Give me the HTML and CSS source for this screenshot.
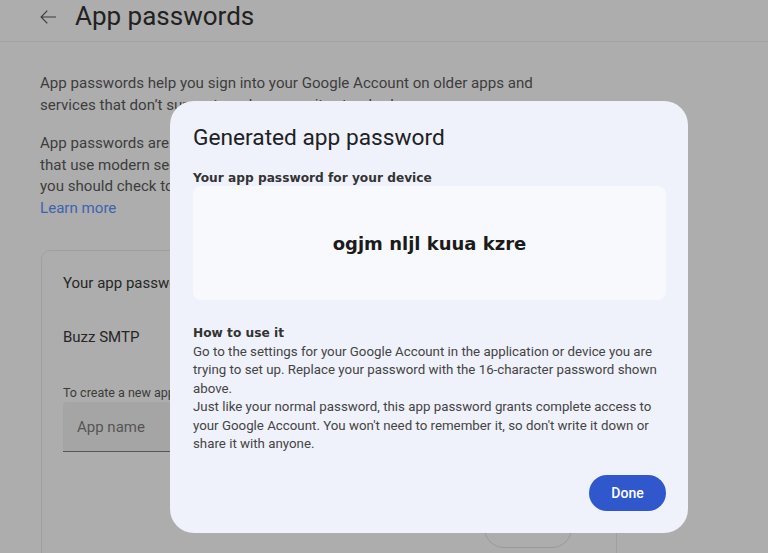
FILE: index.html
```html
<!DOCTYPE html>
<html lang="en">
<head>
<meta charset="utf-8">
<title>App passwords</title>
<link rel="stylesheet" href="styles.css">
</head>
<body>
<div class="page">
  <header class="topbar">
    <svg class="back" width="24" height="24" viewBox="0 0 24 24"><path d="M20 11.4H6.4l5.3-5.3-.8-.8L4.3 12l6.6 6.7.8-.8-5.3-5.3H20z" fill="currentColor"/></svg>
    <h1 class="title">App passwords</h1>
  </header>
  <main class="content">
    <p class="para">App passwords help you sign into your Google Account on older apps and<br>services that don’t support modern security standards.</p>
    <p class="para second">App passwords are less secure than using up-to-date apps and services<br>that use modern security standards. Before you create an app password,<br>you should check to see if your app needs this in order to sign in.<br><a class="link" href="#">Learn more</a></p>
    <section class="card">
      <h2 class="card-title">Your app passwords</h2>
      <div class="app-row">Buzz SMTP</div>
      <p class="hint">To create a new app specific password, type a name for it below...</p>
      <div class="field"><span class="placeholder">App name</span></div>
      <div class="actions"><span class="create">Create</span></div>
    </section>
  </main>
</div>
<div class="dialog" role="dialog">
  <h2 class="dlg-title">Generated app password</h2>
  <div class="label">Your app password for your device</div>
  <div class="pw-box"><span class="pw">ogjm nljl kuua kzre</span></div>
  <div class="label how">How to use it</div>
  <p class="body-text">Go to the settings for your Google Account in the application or device you are trying to set up. Replace your password with the 16-character password shown above.<br>Just like your normal password, this app password grants complete access to your Google Account. You won't need to remember it, so don't write it down or share it with anyone.</p>
  <div class="dlg-actions"><button class="done">Done</button></div>
</div>
</body>
</html>
```
FILE: styles.css
```css
html, body {
  margin: 0;
  padding: 0;
}
body {
  background: #adadad;
  font-family: Roboto, "Liberation Sans", sans-serif;
  width: 768px;
  height: 553px;
  overflow: hidden;
  position: relative;
}
.page {
  width: 768px;
}
.topbar {
  display: flex;
  align-items: center;
  height: 41px;
  border-bottom: 1px solid #a2a2a2;
  padding-left: 36px;
  gap: 15px;
}
.back {
  color: #3a3a3a;
  margin-top: -7px;
}
.title {
  margin: -10px 0 0;
  font-size: 26px;
  font-weight: 400;
  color: #222;
}
.content {
  padding: 31px 0 0 40px;
}
.para {
  margin: 0;
  font-size: 15.1px;
  line-height: 21.5px;
  color: #3d3d3d;
}
.para.second {
  margin-top: 17px;
}
.link {
  color: #4062b2;
  text-decoration: none;
}
.card {
  margin: 31px 0 0 1px;
  width: 576px;
  height: 320px;
  border: 1px solid #a0a0a0;
  border-radius: 9px;
  box-sizing: border-box;
  padding: 21px 21px 0;
}
.card-title {
  margin: 0;
  font-size: 15px;
  font-weight: 400;
  color: #262626;
  line-height: 22px;
}
.app-row {
  margin-top: 32px;
  font-size: 15px;
  line-height: 22px;
  color: #262626;
}
.hint {
  margin: 37px 0 0;
  font-size: 12.5px;
  line-height: 16px;
  color: #3b3b3b;
}
.field {
  margin-top: 1px;
  width: 400px;
  height: 50px;
  background: #a5a5a5;
  border-bottom: 1.5px solid #555;
  border-radius: 4px 4px 0 0;
  box-sizing: border-box;
  display: flex;
  align-items: center;
  padding-left: 14px;
}
.placeholder {
  font-size: 15px;
  color: #555;
}
.actions {
  display: flex;
  justify-content: flex-end;
  margin-top: 56px;
  padding-right: 23px;
}
.create {
  width: 88px;
  height: 40px;
  border: 1px solid #9a9a9a;
  border-radius: 20px;
  box-sizing: border-box;
  display: flex;
  align-items: center;
  justify-content: center;
  font-size: 14px;
  color: #555;
}
.dialog {
  position: absolute;
  left: 170px;
  top: 101px;
  width: 518px;
  height: 432px;
  box-sizing: border-box;
  background: #eff2fa;
  border-radius: 24px;
  padding: 23px 22px 22px 23px;
  display: flex;
  flex-direction: column;
}
.dlg-title {
  margin: 0;
  font-size: 22.7px;
  font-weight: 400;
  line-height: 28px;
  color: #202124;
}
.label {
  margin-top: 18px;
  font-family: "DejaVu Sans", Verdana, sans-serif;
  font-weight: 700;
  font-size: 12.2px;
  line-height: 16px;
  color: #333;
}
.pw-box {
  height: 114px;
  background: #f8f9fd;
  border-radius: 8px;
  display: flex;
  align-items: center;
  justify-content: center;
}
.pw {
  font-family: "DejaVu Sans", Verdana, sans-serif;
  font-weight: 700;
  font-size: 18px;
  color: #1b1b1b;
}
.label.how {
  margin-top: 25px;
}
.body-text {
  margin: 2px 0 0;
  font-size: 13.3px;
  line-height: 18.4px;
  color: #444;
}
.dlg-actions {
  margin-top: auto;
  display: flex;
  justify-content: flex-end;
}
.done {
  width: 77px;
  height: 36px;
  border: none;
  border-radius: 18px;
  background: #3058cc;
  color: #fff;
  font-family: Roboto, "Liberation Sans", sans-serif;
  font-size: 14px;
  font-weight: 500;
  cursor: pointer;
}
```
